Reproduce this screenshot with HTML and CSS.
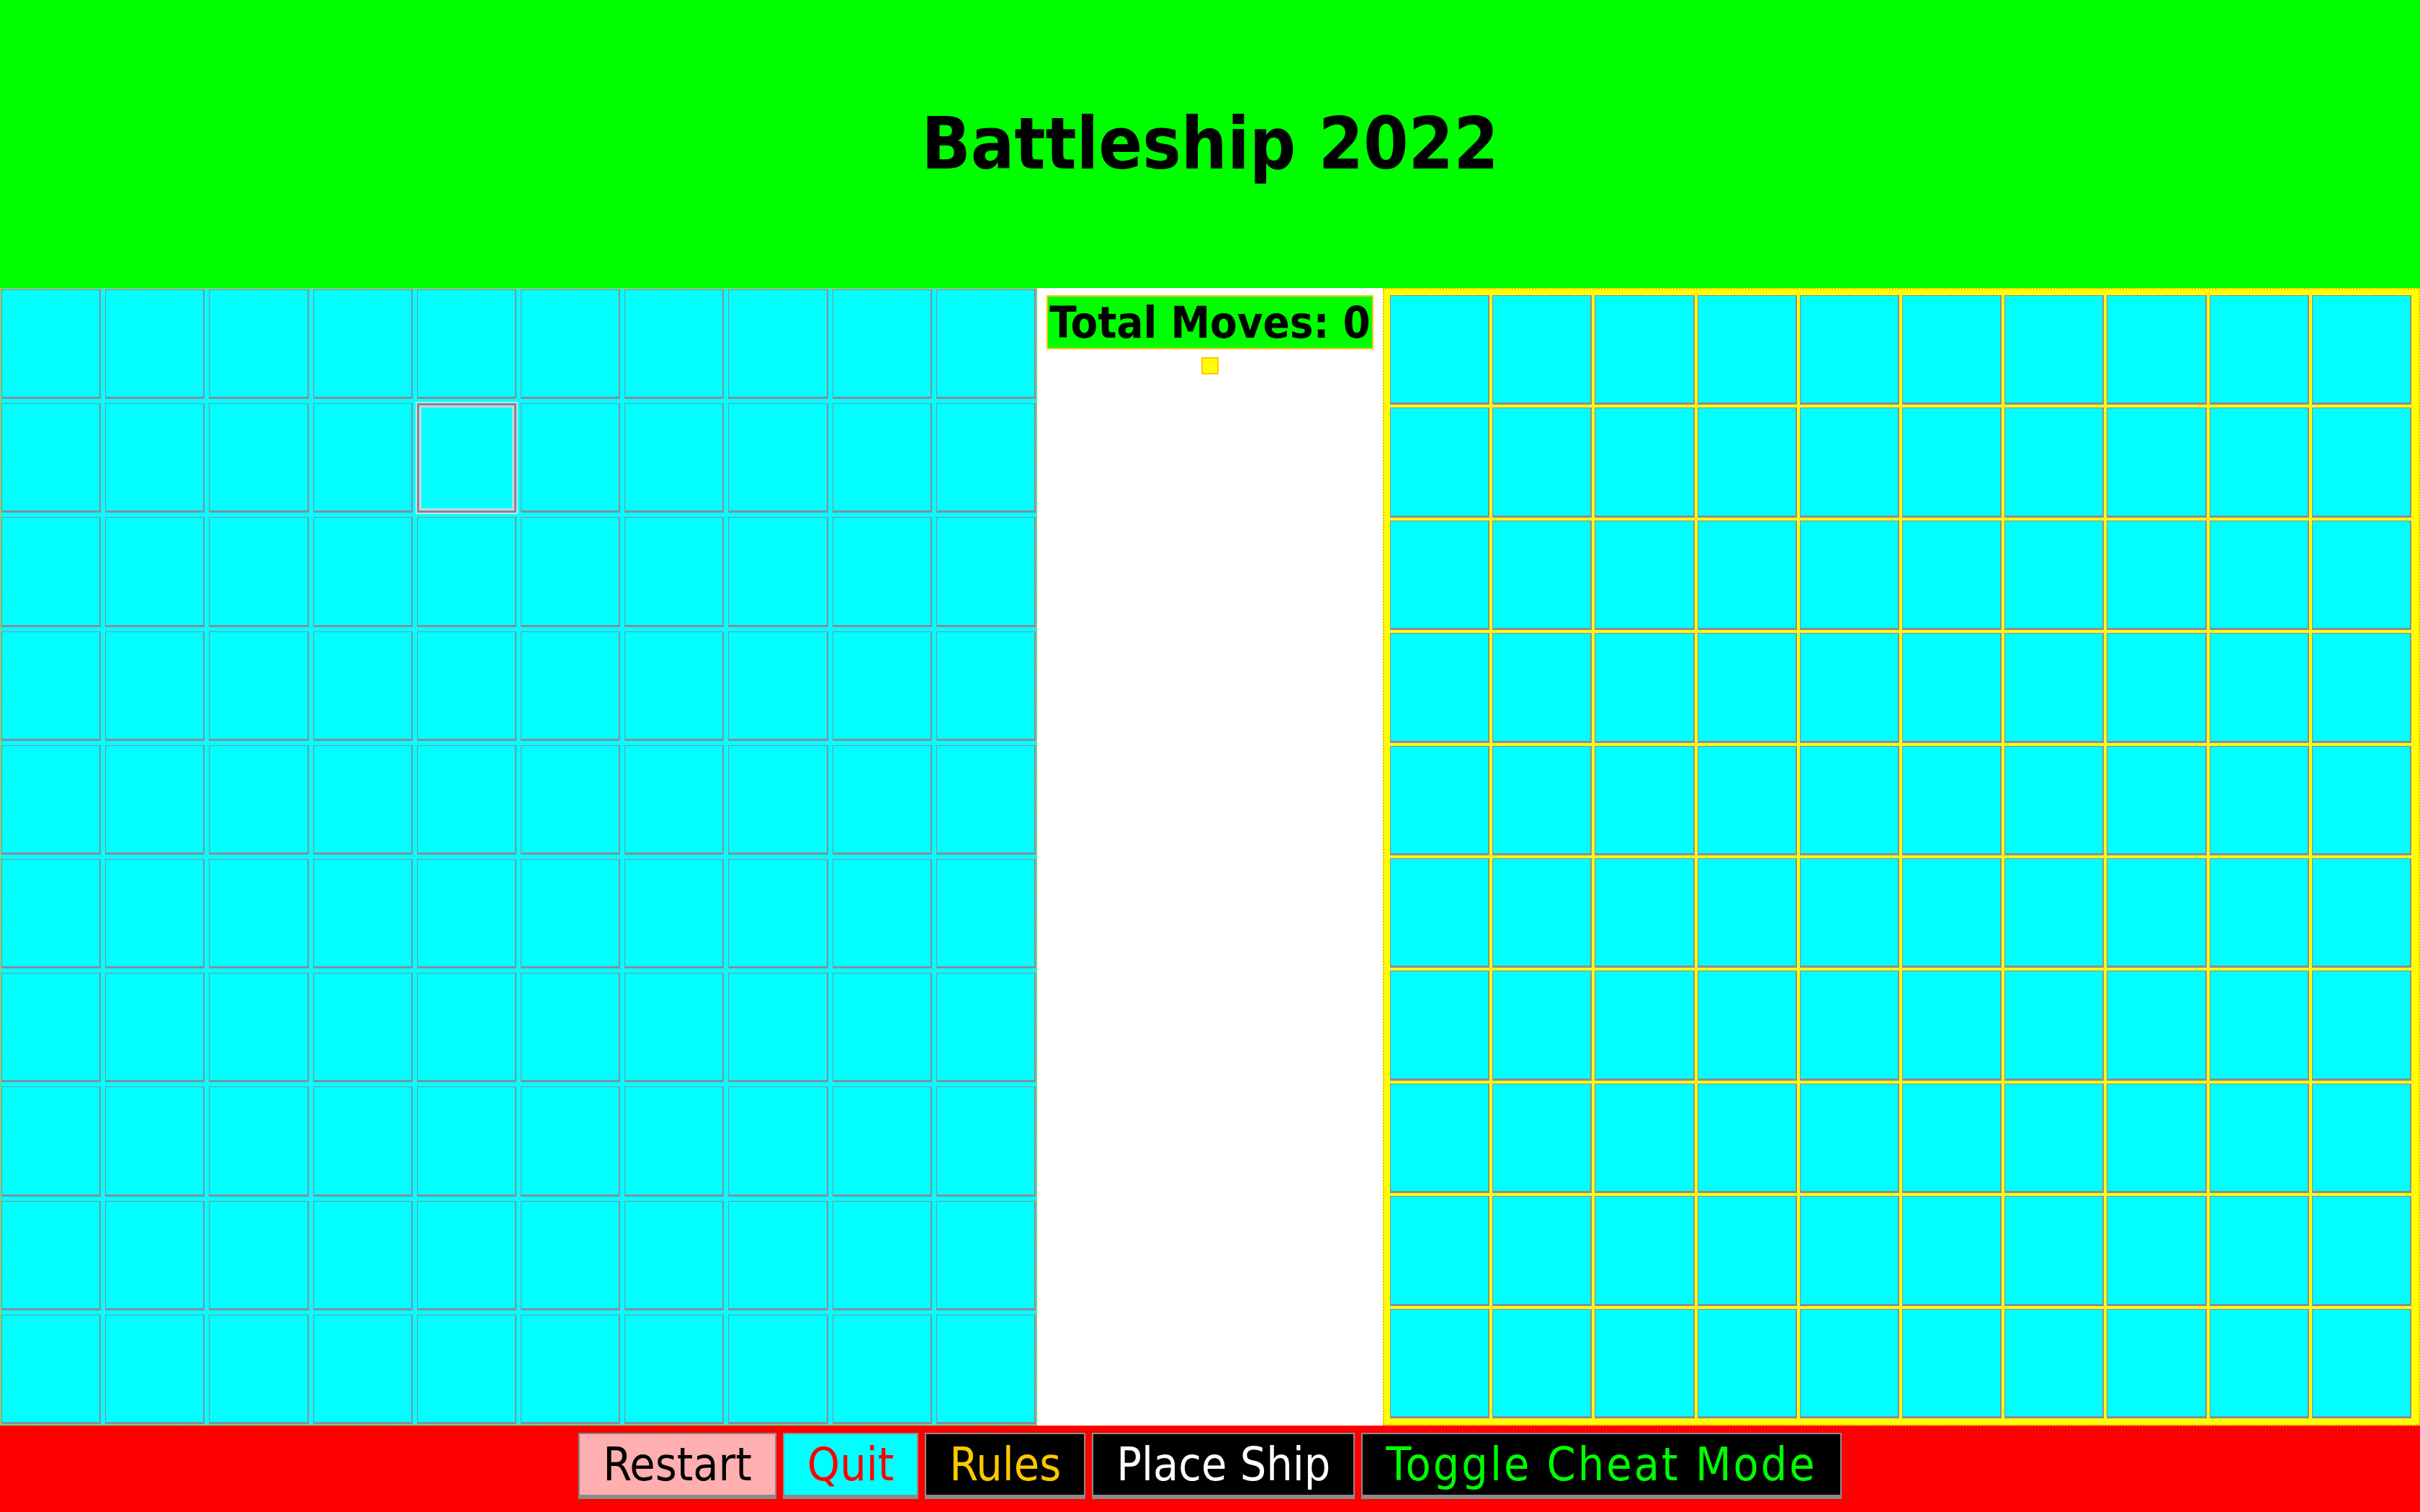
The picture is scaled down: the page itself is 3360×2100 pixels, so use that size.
FILE: index.html
```html
<!DOCTYPE html>
<html>
<head>
<meta charset="utf-8">
<title>Battleship 2022</title>
<link rel="stylesheet" href="styles.css">
</head>
<body>
<div class="app">
  <header class="title-bar"><h1 class="title">Battleship 2022</h1></header>
  <main class="boards">
    <section class="board board-player">
      <div class="cell"></div><div class="cell"></div><div class="cell"></div><div class="cell"></div><div class="cell"></div><div class="cell"></div><div class="cell"></div><div class="cell"></div><div class="cell"></div><div class="cell"></div>
      <div class="cell"></div><div class="cell"></div><div class="cell"></div><div class="cell"></div><div class="cell focused"></div><div class="cell"></div><div class="cell"></div><div class="cell"></div><div class="cell"></div><div class="cell"></div>
      <div class="cell"></div><div class="cell"></div><div class="cell"></div><div class="cell"></div><div class="cell"></div><div class="cell"></div><div class="cell"></div><div class="cell"></div><div class="cell"></div><div class="cell"></div>
      <div class="cell"></div><div class="cell"></div><div class="cell"></div><div class="cell"></div><div class="cell"></div><div class="cell"></div><div class="cell"></div><div class="cell"></div><div class="cell"></div><div class="cell"></div>
      <div class="cell"></div><div class="cell"></div><div class="cell"></div><div class="cell"></div><div class="cell"></div><div class="cell"></div><div class="cell"></div><div class="cell"></div><div class="cell"></div><div class="cell"></div>
      <div class="cell"></div><div class="cell"></div><div class="cell"></div><div class="cell"></div><div class="cell"></div><div class="cell"></div><div class="cell"></div><div class="cell"></div><div class="cell"></div><div class="cell"></div>
      <div class="cell"></div><div class="cell"></div><div class="cell"></div><div class="cell"></div><div class="cell"></div><div class="cell"></div><div class="cell"></div><div class="cell"></div><div class="cell"></div><div class="cell"></div>
      <div class="cell"></div><div class="cell"></div><div class="cell"></div><div class="cell"></div><div class="cell"></div><div class="cell"></div><div class="cell"></div><div class="cell"></div><div class="cell"></div><div class="cell"></div>
      <div class="cell"></div><div class="cell"></div><div class="cell"></div><div class="cell"></div><div class="cell"></div><div class="cell"></div><div class="cell"></div><div class="cell"></div><div class="cell"></div><div class="cell"></div>
      <div class="cell"></div><div class="cell"></div><div class="cell"></div><div class="cell"></div><div class="cell"></div><div class="cell"></div><div class="cell"></div><div class="cell"></div><div class="cell"></div><div class="cell"></div>
    </section>
    <section class="info">
      <div class="moves">Total Moves: 0</div>
      <div class="indicator"></div>
    </section>
    <section class="board board-enemy">
      <div class="cell"></div><div class="cell"></div><div class="cell"></div><div class="cell"></div><div class="cell"></div><div class="cell"></div><div class="cell"></div><div class="cell"></div><div class="cell"></div><div class="cell"></div>
      <div class="cell"></div><div class="cell"></div><div class="cell"></div><div class="cell"></div><div class="cell"></div><div class="cell"></div><div class="cell"></div><div class="cell"></div><div class="cell"></div><div class="cell"></div>
      <div class="cell"></div><div class="cell"></div><div class="cell"></div><div class="cell"></div><div class="cell"></div><div class="cell"></div><div class="cell"></div><div class="cell"></div><div class="cell"></div><div class="cell"></div>
      <div class="cell"></div><div class="cell"></div><div class="cell"></div><div class="cell"></div><div class="cell"></div><div class="cell"></div><div class="cell"></div><div class="cell"></div><div class="cell"></div><div class="cell"></div>
      <div class="cell"></div><div class="cell"></div><div class="cell"></div><div class="cell"></div><div class="cell"></div><div class="cell"></div><div class="cell"></div><div class="cell"></div><div class="cell"></div><div class="cell"></div>
      <div class="cell"></div><div class="cell"></div><div class="cell"></div><div class="cell"></div><div class="cell"></div><div class="cell"></div><div class="cell"></div><div class="cell"></div><div class="cell"></div><div class="cell"></div>
      <div class="cell"></div><div class="cell"></div><div class="cell"></div><div class="cell"></div><div class="cell"></div><div class="cell"></div><div class="cell"></div><div class="cell"></div><div class="cell"></div><div class="cell"></div>
      <div class="cell"></div><div class="cell"></div><div class="cell"></div><div class="cell"></div><div class="cell"></div><div class="cell"></div><div class="cell"></div><div class="cell"></div><div class="cell"></div><div class="cell"></div>
      <div class="cell"></div><div class="cell"></div><div class="cell"></div><div class="cell"></div><div class="cell"></div><div class="cell"></div><div class="cell"></div><div class="cell"></div><div class="cell"></div><div class="cell"></div>
      <div class="cell"></div><div class="cell"></div><div class="cell"></div><div class="cell"></div><div class="cell"></div><div class="cell"></div><div class="cell"></div><div class="cell"></div><div class="cell"></div><div class="cell"></div>
    </section>
  </main>
  <footer class="controls">
    <button class="btn btn-restart">Restart</button>
    <button class="btn btn-quit">Quit</button>
    <button class="btn btn-rules">Rules</button>
    <button class="btn btn-place">Place Ship</button>
    <button class="btn btn-cheat">Toggle Cheat Mode</button>
  </footer>
</div>
</body>
</html>
```
FILE: styles.css
```css
html, body {
  margin: 0;
  padding: 0;
  width: 3360px;
  height: 2100px;
  overflow: hidden;
  background: #ffffff;
  font-family: "DejaVu Sans Condensed", "DejaVu Sans", sans-serif;
  font-stretch: condensed;
}

.app {
  display: flex;
  flex-direction: column;
  width: 3360px;
  height: 2100px;
}

.title-bar {
  height: 400px;
  flex: 0 0 400px;
  background: #00ff00;
  display: flex;
  align-items: center;
  justify-content: center;
}

.title {
  margin: 0;
  font-size: 100px;
  font-weight: bold;
  color: #000000;
  line-height: 1;
}

.boards {
  flex: 0 0 1580px;
  height: 1580px;
  display: flex;
}

.board {
  box-sizing: border-box;
  height: 1580px;
  display: grid;
  grid-template-columns: repeat(10, 1fr);
  grid-template-rows: repeat(10, 1fr);
}

.board-player {
  width: 1440px;
  background: #00ffff;
  border: 2px dotted #d9b400;
  gap: 6px;
}

.board-enemy {
  width: 1440px;
  background: #ffff00;
  border: 2px dotted #f0b400;
  padding: 8px 10px 8px 8px;
  gap: 4px;
}

.cell {
  box-sizing: border-box;
  background: #00ffff;
  border-style: solid;
  border-color: #8a8c9c;
  border-width: 1px 2px 3px 1px;
}

.cell.focused {
  border: 3px solid #7e8a96;
  box-shadow: 0 0 0 2px #c6e2ea, inset 0 0 0 3px #c9d6de;
}

.info {
  flex: 0 0 480px;
  width: 480px;
  background: #ffffff;
  display: flex;
  flex-direction: column;
  align-items: center;
  padding-top: 10px;
  box-sizing: border-box;
}

.moves {
  box-sizing: border-box;
  height: 75px;
  padding: 0 2px;
  border: 2px solid #ffc800;
  background: #00ff00;
  color: #000000;
  font-weight: bold;
  font-size: 61px;
  line-height: 71px;
  white-space: nowrap;
}

.indicator {
  box-sizing: border-box;
  width: 24px;
  height: 24px;
  margin-top: 11px;
  background: #ffff00;
  border: 2px solid #ffc800;
}

.controls {
  flex: 0 0 120px;
  height: 120px;
  background: #ff0000;
  display: flex;
  justify-content: center;
  align-items: flex-start;
  gap: 9px;
  padding-top: 10px;
  box-sizing: border-box;
}

.btn {
  box-sizing: border-box;
  height: 92px;
  padding: 0 32px;
  margin: 0;
  font-family: "DejaVu Sans Condensed", "DejaVu Sans", sans-serif;
  font-stretch: condensed;
  font-size: 64px;
  line-height: 84px;
  border-style: solid;
  border-color: #8c8c8c;
  border-width: 2px 2px 6px 2px;
  white-space: nowrap;
}

.btn-restart { background: #ffafaf; color: #000000; }
.btn-quit { background: #00ffff; color: #ff0000; }
.btn-rules { background: #000000; color: #ffc800; }
.btn-place { background: #000000; color: #ffffff; }
.btn-cheat { background: #000000; color: #00ff00; letter-spacing: 3px; }
```
